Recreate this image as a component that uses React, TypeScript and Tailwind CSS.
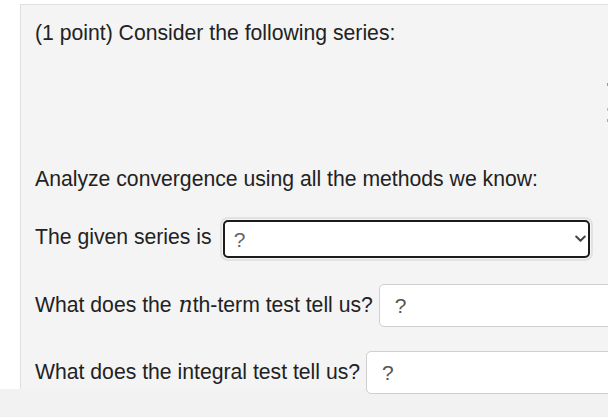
import React from 'react'

// ── Champ réponse (input ou select) ─────────────────────────

function AnswerBox({ left, select }: { left: string; select?: boolean }) {
  if (select) {
    return (
      <div className={`flex h-[38px] w-[367px] shrink-0 items-center justify-between rounded-[5px] border-2 border-[#1c1c1c] bg-white pl-[9px] pr-[2px] shadow-[0_0_0_1px_#f4f4f4,0_0_0_3px_#e2e2e2] ${left}`}>
        <span className="text-[21px] leading-none text-[#666]">?</span>
        <svg width="11" height="8" viewBox="0 0 11 8" fill="none" stroke="#444" strokeWidth={2}>
          <path d="M1.2 1.5l4.3 4.3 4.3-4.3" strokeLinecap="round" strokeLinejoin="round" />
        </svg>
      </div>
    )
  }
  return (
    <div className={`flex h-[43px] w-[320px] shrink-0 items-center rounded-[5px] border border-[#cfcfcf] bg-white pl-[15px] ${left}`}>
      <span className="text-[21px] leading-none text-[#555]">?</span>
    </div>
  )
}

export default function App() {
  return (
    <div className="h-[417px] w-[608px] overflow-hidden bg-[#f2f2f2] font-['Liberation_Sans',Arial,sans-serif] text-[21.2px] leading-[24px] text-[#222]">
      <div className="h-[389px] bg-white pl-[20px] pt-[4px]">
        <div className="h-full border-l border-t border-[#e0e0e0] bg-[#f4f4f4] pl-[14px] pt-[16px]">
          <p className="whitespace-nowrap">(1 point) Consider the following series:</p>

          {/* Formule (coupée à droite) */}
          <div className="flex h-[122px] justify-end">
            <svg width="2" height="122" viewBox="0 0 2 122">
              <rect x="1" y="38" width="1" height="3" fill="#999" />
              <rect x="1" y="63" width="1" height="3" fill="#bbb" />
              <rect x="1" y="74" width="1" height="3" fill="#aaa" />
            </svg>
          </div>

          <p className="whitespace-nowrap">Analyze convergence using all the methods we know:</p>

          <div className="mt-[29px] flex items-center">
            <span className="mb-[4px] whitespace-nowrap">The given series is</span>
            <AnswerBox left="ml-[11px]" select />
          </div>

          <div className="mt-[26px] flex items-center">
            <span className="mb-[2px] whitespace-nowrap">
              What does the{' '}
              <span className="ml-[1px] font-['DejaVu_Serif',serif] text-[22px] italic">n</span>
              th-term test tell us?
            </span>
            <AnswerBox left="ml-[6px]" />
          </div>

          <div className="mt-[24px] flex items-center">
            <span className="mb-[2px] whitespace-nowrap">What does the integral test tell us?</span>
            <AnswerBox left="ml-[6px]" />
          </div>
        </div>
      </div>
    </div>
  )
}
